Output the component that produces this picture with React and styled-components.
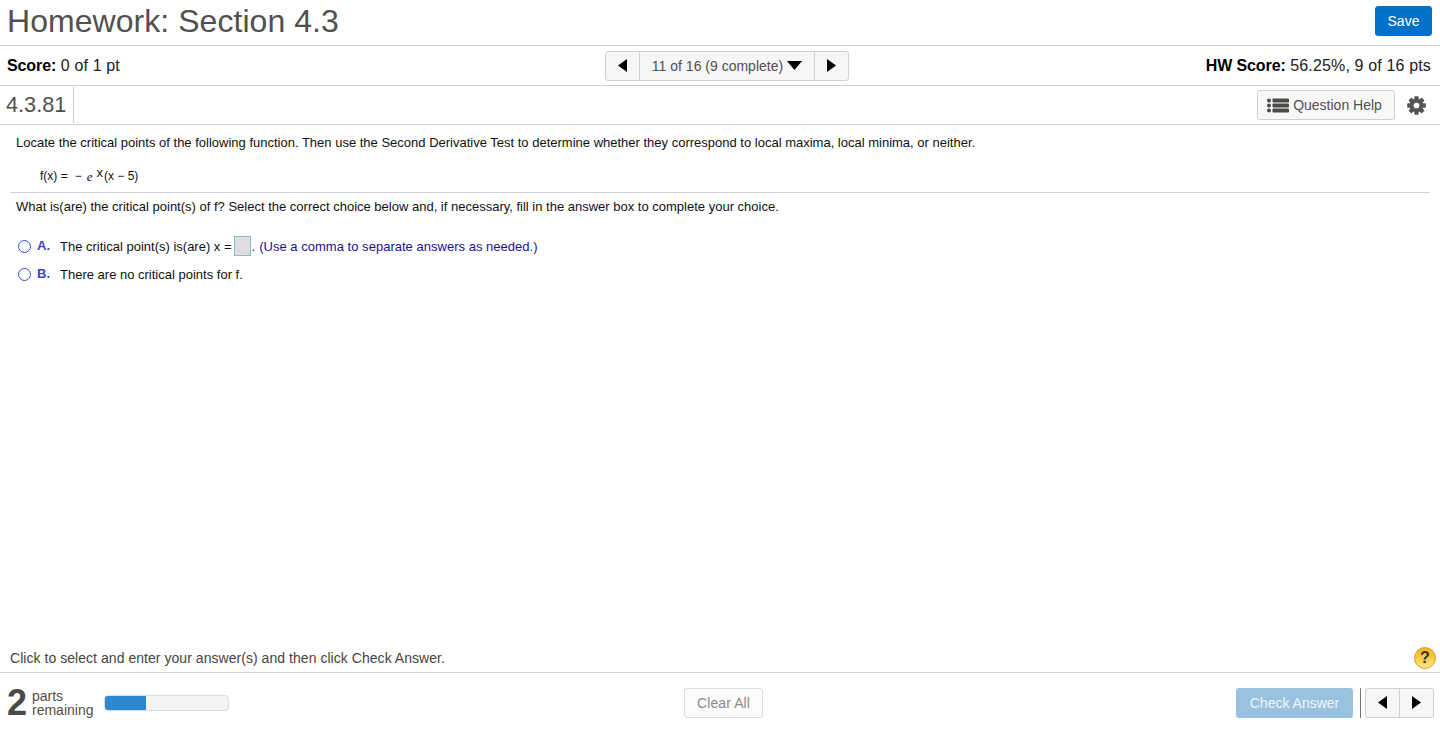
import React from 'react';
import styled, { createGlobalStyle } from 'styled-components';

const GlobalStyle = createGlobalStyle`
  html, body {
    margin: 0;
    padding: 0;
    background: #fff;
    font-family: "Liberation Sans", Arial, sans-serif;
  }
`;

const Page = styled.div`
  height: 734px;
  display: flex;
  flex-direction: column;
  overflow: hidden;
`;

const TitleBar = styled.header`
  height: 45px;
  flex: none;
  display: flex;
  align-items: center;
  justify-content: space-between;
  padding: 0 8px 0 7px;
  border-bottom: 1px solid #ccd0dc;
`;

const Title = styled.h1`
  margin: 0 0 2px;
  font-size: 32px;
  font-weight: 400;
  letter-spacing: 0.05px;
  color: #505050;
`;

const SaveButton = styled.button`
  width: 57px;
  height: 30px;
  margin-bottom: 3px;
  border: 1px solid #0070c9;
  border-radius: 3px;
  background: #0070c9;
  color: #fff;
  font: 14px "Liberation Sans", Arial, sans-serif;
  padding: 0;
`;

const ScoreBar = styled.div`
  height: 39px;
  flex: none;
  display: grid;
  grid-template-columns: 598px auto 1fr;
  align-items: center;
  padding: 0 9px 0 7px;
  border-bottom: 1px solid #ccd0dc;
  font-size: 16px;
  letter-spacing: 0.15px;
  color: #222;
`;

const ScoreText = styled.div`
  text-align: ${(p) => (p.$right ? 'right' : 'left')};
  strong { color: #000; letter-spacing: -0.1px; }
`;

const Pager = styled.div`
  display: flex;
  height: 28px;
  border: 1px solid #d0d0d0;
  border-radius: 3px;
  background: #f6f6f6;
  letter-spacing: 0;
`;

const PagerArrow = styled.div`
  width: 33px;
  display: flex;
  align-items: center;
  justify-content: center;
  & + & { border-left: 1px solid #d0d0d0; }
`;

const PagerLabel = styled.div`
  width: 174px;
  display: flex;
  align-items: center;
  justify-content: center;
  gap: 4px;
  font-size: 14px;
  color: #505050;
  border-left: 1px solid #d0d0d0;
  border-right: 1px solid #d0d0d0;
`;

const QuestionBar = styled.div`
  height: 38px;
  flex: none;
  display: flex;
  align-items: center;
  justify-content: space-between;
  border-bottom: 1px solid #ccd0dc;
`;

const QuestionNumber = styled.div`
  height: 36px;
  display: flex;
  align-items: center;
  padding: 0 7px 0 6px;
  border-right: 1px solid #ccd0dc;
  font-size: 21.7px;
  color: #505050;
`;

const QuestionTools = styled.div`
  display: flex;
  align-items: center;
  gap: 12px;
  padding-right: 14px;
`;

const HelpButton = styled.button`
  width: 138px;
  height: 30px;
  display: flex;
  align-items: center;
  justify-content: center;
  gap: 4px;
  padding: 0 3px 0 0;
  border: 1px solid #d0d0d0;
  border-radius: 3px;
  background: #f8f8f8;
  color: #505050;
  font: 14px "Liberation Sans", Arial, sans-serif;
`;

const Content = styled.main`
  flex: 1;
  min-height: 0;
  padding: 0 10px;
  font-size: 13px;
  color: #111;
`;

const Prompt = styled.p`
  margin: 0;
  padding: ${(p) => p.$pad};
  line-height: 16px;
`;

const Formula = styled.div`
  height: 24px;
  margin-top: 15px;
  padding: 0 0 2px 30px;
  display: flex;
  align-items: flex-start;
  border-bottom: 1px solid #ccd0dc;
  font-size: 12px;
  line-height: 21px;
`;

const MathMinus = styled.span`
  margin-left: 7px;
  width: 6px;
`;

const MathE = styled.span`
  margin-left: 6px;
  font-family: "Liberation Serif", serif;
  font-style: italic;
  font-size: 13px;
`;

const MathExponent = styled.span`
  margin: -4px 1px 0 4px;
  font-size: 13px;
`;

const Choices = styled.div`
  margin-top: 23px;
  padding-left: 8px;
  display: flex;
  flex-direction: column;
  gap: 12px;
`;

const Choice = styled.div`
  display: flex;
  align-items: center;
  height: 16px;
`;

const Radio = styled.span`
  width: 11px;
  height: 11px;
  flex: none;
  border: 1px solid #3450d2;
  border-radius: 50%;
  background: #fff;
`;

const ChoiceLetter = styled.span`
  width: 23px;
  margin-left: 6px;
  font-weight: 700;
  color: #3c44c8;
  position: relative;
  top: -1px;
`;

const AnswerBox = styled.span`
  display: inline-block;
  width: 15px;
  height: 18px;
  margin: 0 1px 0 2px;
  background: #dedede;
  border: 1px solid #86bccb;
`;

const Hint = styled.span`
  color: #1c0f96;
  margin-left: 4px;
  letter-spacing: 0.02px;
`;

const InstructionBar = styled.div`
  height: 39px;
  flex: none;
  box-sizing: border-box;
  display: flex;
  align-items: center;
  justify-content: space-between;
  padding: 10px 4px 0 10px;
  border-bottom: 1px solid #ccd0dc;
  font-size: 14px;
  letter-spacing: 0.045px;
  color: #444;
`;

const HelpBadge = styled.span`
  width: 22px;
  height: 22px;
  border-radius: 50%;
  display: flex;
  align-items: center;
  justify-content: center;
  background: linear-gradient(#f2b52a, #f7c93f 45%, #fde685);
  border: 1px solid #d9a128;
  box-sizing: border-box;
  color: #333;
  font-size: 16px;
  font-weight: 700;
`;

const Footer = styled.footer`
  height: 61px;
  flex: none;
  box-sizing: border-box;
  display: grid;
  grid-template-columns: 677px auto 1fr;
  align-items: center;
  padding: 0 6px 2px 7px;
`;

const Parts = styled.div`
  display: flex;
  align-items: center;
`;

const PartsCount = styled.span`
  font-size: 36px;
  font-weight: 700;
  color: #4a4a4a;
  width: 25px;
  line-height: 36px;
`;

const PartsLabel = styled.span`
  width: 72px;
  font-size: 14px;
  line-height: 14px;
  color: #505050;
`;

const Progress = styled.div`
  width: 125px;
  height: 16px;
  box-sizing: border-box;
  border: 1px solid #ddd;
  border-radius: 4px;
  background: #f4f4f4;
  overflow: hidden;
`;

const ProgressFill = styled.div`
  height: 100%;
  background: #2f86d0;
`;

const ClearButton = styled.button`
  width: 79px;
  height: 30px;
  padding: 0;
  border: 1px solid #ddd;
  border-radius: 3px;
  background: #fbfbfb;
  color: #8a8a8a;
  font: 14px "Liberation Sans", Arial, sans-serif;
  letter-spacing: 0.1px;
`;

const FooterActions = styled.div`
  display: flex;
  align-items: center;
  justify-content: flex-end;
`;

const CheckButton = styled.button`
  width: 117px;
  height: 30px;
  padding: 0;
  border: none;
  border-radius: 3px;
  background: #99c1e0;
  color: #eef5fa;
  font: 14px "Liberation Sans", Arial, sans-serif;
`;

const Divider = styled.span`
  width: 1px;
  height: 30px;
  margin: 0 4px 0 7px;
  background: #777;
`;

const Triangle = ({ dir }) => (
  <svg width="9" height="13" viewBox="0 0 9 13" aria-hidden="true">
    <path d={dir === 'left' ? 'M9 0v13L0 6.5z' : 'M0 0v13l9-6.5z'} fill="#000" />
  </svg>
);

const ListIcon = () => (
  <svg width="22" height="15" viewBox="0 0 22 15" aria-hidden="true" fill="#4a4a4a">
    <circle cx="2" cy="2.4" r="2" />
    <circle cx="2" cy="7.5" r="2" />
    <circle cx="2" cy="12.6" r="2" />
    <rect x="5.5" y="0.5" width="16.5" height="4" rx="0.8" />
    <rect x="5.5" y="5.5" width="16.5" height="4" rx="0.8" />
    <rect x="5.5" y="10.5" width="16.5" height="4" rx="0.8" />
  </svg>
);

const GearIcon = () => (
  <svg width="19" height="19" viewBox="0 0 20 20" aria-hidden="true">
    <g fill="#555">
      {[0, 45, 90, 135].map((a) => (
        <rect key={a} x="7.7" y="0.2" width="4.6" height="19.6" rx="0.8" transform={`rotate(${a} 10 10)`} />
      ))}
      <circle cx="10" cy="10" r="7.2" />
    </g>
    <circle cx="10" cy="10" r="3" fill="#fff" />
  </svg>
);

const App = () => (
  <Page>
    <GlobalStyle />
    <TitleBar>
      <Title>Homework: Section 4.3</Title>
      <SaveButton>Save</SaveButton>
    </TitleBar>
    <ScoreBar>
      <ScoreText><strong>Score:</strong> 0 of 1 pt</ScoreText>
      <Pager>
        <PagerArrow><Triangle dir="left" /></PagerArrow>
        <PagerLabel>
          11 of 16 (9 complete)
          <svg width="15" height="9" viewBox="0 0 15 9" aria-hidden="true"><path d="M0 0h15L7.5 9z" fill="#000" /></svg>
        </PagerLabel>
        <PagerArrow><Triangle dir="right" /></PagerArrow>
      </Pager>
      <ScoreText $right><strong>HW Score:</strong> 56.25%, 9 of 16 pts</ScoreText>
    </ScoreBar>
    <QuestionBar>
      <QuestionNumber>4.3.81</QuestionNumber>
      <QuestionTools>
        <HelpButton><ListIcon />Question Help</HelpButton>
        <GearIcon />
      </QuestionTools>
    </QuestionBar>
    <Content>
      <Prompt $pad="10px 0 0 6px">
        Locate the critical points of the following function. Then use the Second Derivative Test to determine whether they correspond to local maxima, local minima, or neither.
      </Prompt>
      <Formula>
        <span>f(x) =</span>
        <MathMinus>−</MathMinus>
        <MathE>e</MathE>
        <MathExponent>x</MathExponent>
        <span>(x − 5)</span>
      </Formula>
      <Prompt $pad="6px 0 0 6px">
        What is(are) the critical point(s) of f? Select the correct choice below and, if necessary, fill in the answer box to complete your choice.
      </Prompt>
      <Choices>
        <Choice>
          <Radio />
          <ChoiceLetter>A.</ChoiceLetter>
          The critical point(s) is(are) x =
          <AnswerBox />.
          <Hint>(Use a comma to separate answers as needed.)</Hint>
        </Choice>
        <Choice>
          <Radio />
          <ChoiceLetter>B.</ChoiceLetter>
          There are no critical points for f.
        </Choice>
      </Choices>
    </Content>
    <InstructionBar>
      <span>Click to select and enter your answer(s) and then click Check Answer.</span>
      <HelpBadge>?</HelpBadge>
    </InstructionBar>
    <Footer>
      <Parts>
        <PartsCount>2</PartsCount>
        <PartsLabel>parts remaining</PartsLabel>
        <Progress><ProgressFill style={{ width: '33.3%' }} /></Progress>
      </Parts>
      <ClearButton>Clear All</ClearButton>
      <FooterActions>
        <CheckButton>Check Answer</CheckButton>
        <Divider />
        <Pager>
          <PagerArrow><Triangle dir="left" /></PagerArrow>
          <PagerArrow><Triangle dir="right" /></PagerArrow>
        </Pager>
      </FooterActions>
    </Footer>
  </Page>
);

export default App;
